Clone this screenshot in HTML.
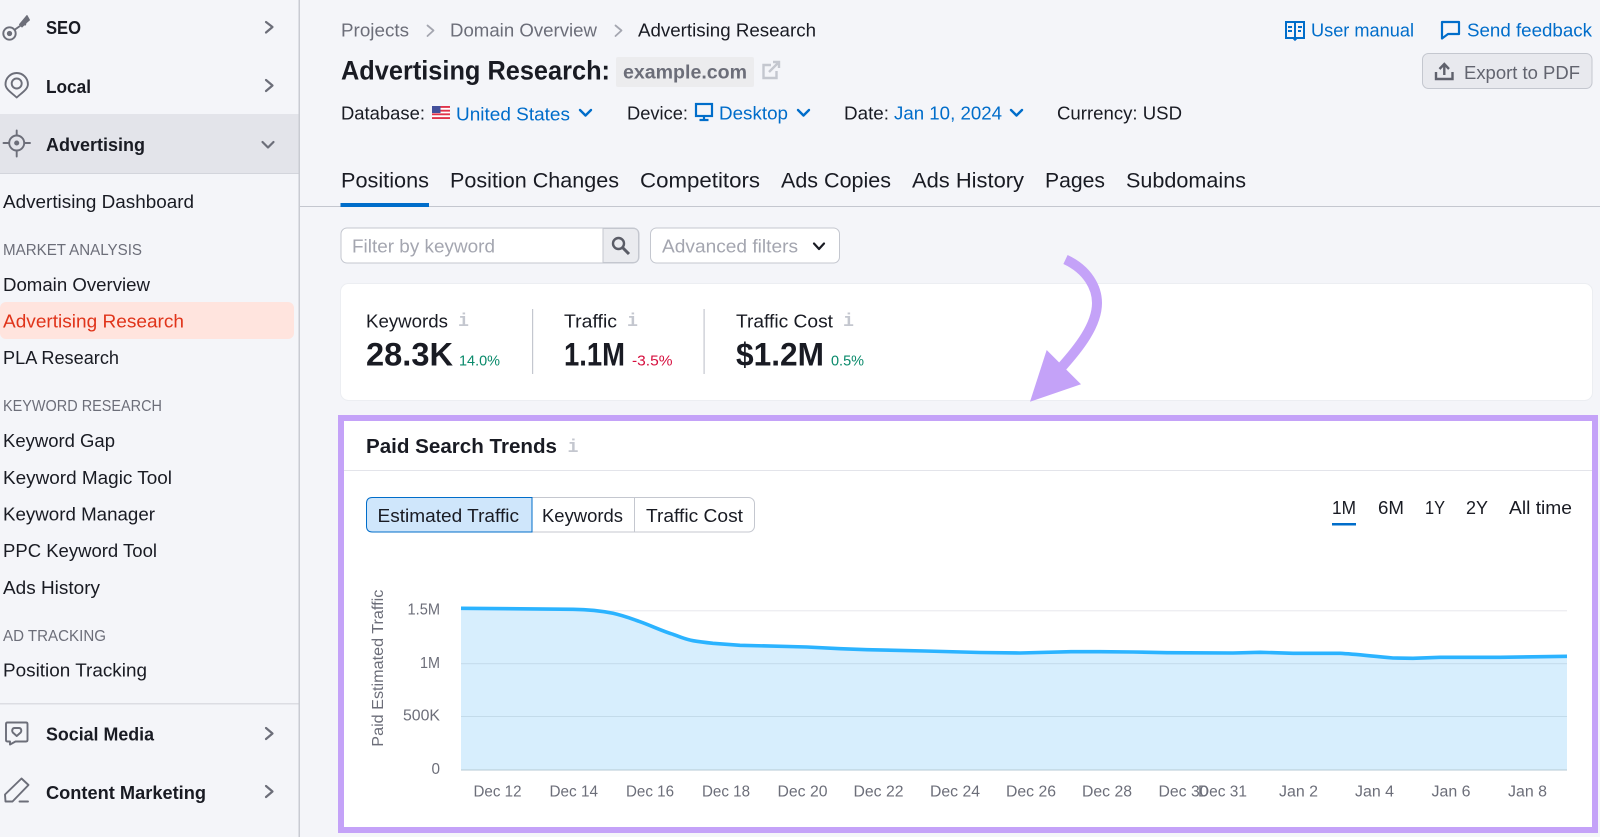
<!DOCTYPE html>
<html lang="en"><head><meta charset="utf-8"><title>Advertising Research</title>
<style>
html,body{margin:0;padding:0;background:#f4f5f9;width:1600px;height:837px;overflow:hidden}
svg{display:block;position:absolute;left:0;top:0}
text{font-family:"Liberation Sans",Arial,sans-serif;fill:#191b23}
.nav{font-size:18px;font-weight:700}
.li{font-size:18.500px}
.cap{font-size:15.500px;fill:#6c6e79}
.t{font-size:18.500px}
.g{fill:#6c6e79}
.b{fill:#006dca}
.ph{fill:#a4a6b0;font-size:18.500px}
.tab{font-size:21px}
.big{font-size:32.500px;font-weight:700}
.d{font-size:15px}
.ax{font-size:15.500px;fill:#6c6e79}
.i{font-family:"Liberation Mono",monospace;font-size:18px;font-weight:700;fill:#c4c7cf;text-anchor:middle}
.ic{fill:none;stroke:#6c6e79;stroke-width:1.900;stroke-linecap:round;stroke-linejoin:round}
.cv{fill:none;stroke:#6c6e79;stroke-width:2.200;stroke-linecap:round;stroke-linejoin:round}
.cb{fill:none;stroke:#006dca;stroke-width:2.400;stroke-linecap:round;stroke-linejoin:round}
.bc{fill:none;stroke:#a4a6b0;stroke-width:1.800;stroke-linecap:round;stroke-linejoin:round}
</style></head><body>
<svg width="1600" height="837" viewBox="0 0 1600 837" xmlns="http://www.w3.org/2000/svg">
<rect width="1600" height="837" fill="#f4f5f9"/>

<!-- Sidebar -->
<rect x="298.500" y="0" width="1.500" height="837" fill="#c9cbd2"/>
<rect x="0" y="114" width="298.500" height="60" fill="#e3e4ea"/>
<rect x="0" y="173" width="298.500" height="1" fill="#d3d5dc"/>
<rect x="0" y="302" width="294" height="37" rx="6" fill="#ffe4de"/>
<rect x="0" y="703" width="298.500" height="1.500" fill="#dcdde3"/>

<!-- SEO key -->
<g class="ic"><circle cx="9.500" cy="33.500" r="6.200"/><circle cx="9.500" cy="33.500" r="1.700" fill="#6c6e79"/><path d="M15 29.500 L20 26"/><path d="M19.500 24.500 L22 27 L24 25 L25.500 25 L26 23 L29.500 20 L27 15.500 Z" fill="#6c6e79" stroke-width="1"/></g>
<text class="nav" x="46" y="34" textLength="35" lengthAdjust="spacingAndGlyphs">SEO</text>
<path class="cv" d="M266 22 L272.500 27 L266 32.500"/>

<!-- Local pin -->
<g class="ic"><path d="M16.700 97.500 C12 93 5.500 89.500 5.500 84.200 A11.200 11.200 0 1 1 27.900 84.200 C27.900 89.500 21.400 93 16.700 97.500 Z"/><circle cx="16.700" cy="83.500" r="5"/></g>
<text class="nav" x="46" y="93" textLength="45" lengthAdjust="spacingAndGlyphs">Local</text>
<path class="cv" d="M266 80 L272.500 85.500 L266 91"/>

<!-- Advertising target -->
<g class="ic"><circle cx="16.700" cy="143" r="7.500"/><circle cx="16.700" cy="143" r="1.600" fill="#6c6e79"/><path d="M3.500 143 H9 M24.500 143 H30 M16.700 130.500 V135.500 M16.700 150.500 V156.500"/></g>
<text class="nav" x="46" y="151" textLength="99" lengthAdjust="spacingAndGlyphs">Advertising</text>
<path class="cv" d="M262.500 142 L268 147.500 L273.500 142"/>

<text class="li" x="3" y="208" textLength="191" lengthAdjust="spacingAndGlyphs">Advertising Dashboard</text>
<text class="cap" x="3" y="255" textLength="139" lengthAdjust="spacingAndGlyphs">MARKET ANALYSIS</text>
<text class="li" x="3" y="291" textLength="147" lengthAdjust="spacingAndGlyphs">Domain Overview</text>
<text class="li" x="3" y="327.500" textLength="181" lengthAdjust="spacingAndGlyphs" style="fill:#e0341a">Advertising Research</text>
<text class="li" x="3" y="364" textLength="116" lengthAdjust="spacingAndGlyphs">PLA Research</text>
<text class="cap" x="3" y="411" textLength="159" lengthAdjust="spacingAndGlyphs">KEYWORD RESEARCH</text>
<text class="li" x="3" y="447" textLength="112" lengthAdjust="spacingAndGlyphs">Keyword Gap</text>
<text class="li" x="3" y="484" textLength="169" lengthAdjust="spacingAndGlyphs">Keyword Magic Tool</text>
<text class="li" x="3" y="520.500" textLength="152" lengthAdjust="spacingAndGlyphs">Keyword Manager</text>
<text class="li" x="3" y="557" textLength="154" lengthAdjust="spacingAndGlyphs">PPC Keyword Tool</text>
<text class="li" x="3" y="594" textLength="97" lengthAdjust="spacingAndGlyphs">Ads History</text>
<text class="cap" x="3" y="641" textLength="103" lengthAdjust="spacingAndGlyphs">AD TRACKING</text>
<text class="li" x="3" y="676.500" textLength="144" lengthAdjust="spacingAndGlyphs">Position Tracking</text>

<!-- Social -->
<g class="ic"><path d="M7.500 722.500 H26 Q27.500 722.500 27.500 724 V740 Q27.500 741.500 26 741.500 H15.500 L10 744.500 V741.500 H7.500 Q6 741.500 6 740 V724 Q6 722.500 7.500 722.500 Z"/><path d="M16.700 736 L12.800 732.500 C11.500 730.500 12.500 728 14.500 728 H19 C21 728 22 730.500 20.700 732.500 Z"/></g>
<text class="nav" x="46" y="740.700" textLength="108" lengthAdjust="spacingAndGlyphs">Social Media</text>
<path class="cv" d="M266 728 L272.500 733.500 L266 739"/>

<!-- Pencil -->
<g class="ic"><path d="M5.500 801.500 L5 794.500 L21.500 778.500 L28.500 785 L12.500 801.500 Z"/><path d="M19.500 801.500 H28"/></g>
<text class="nav" x="46" y="799" textLength="160" lengthAdjust="spacingAndGlyphs">Content Marketing</text>
<path class="cv" d="M266 786 L272.500 791.500 L266 797"/>

<!-- Breadcrumbs -->
<text class="t g" x="341" y="36.500" textLength="68" lengthAdjust="spacingAndGlyphs">Projects</text>
<path class="bc" d="M427.500 25.500 L433.500 30.500 L427.500 36"/>
<text class="t g" x="450" y="36.500" textLength="147" lengthAdjust="spacingAndGlyphs">Domain Overview</text>
<path class="bc" d="M615.500 25.500 L621.500 30.500 L615.500 36"/>
<text class="t" x="638" y="36.500" textLength="178" lengthAdjust="spacingAndGlyphs">Advertising Research</text>

<!-- Top right links -->
<g fill="none" stroke="#006dca" stroke-width="2"><path d="M1286 22 H1295 V38 H1286 Z M1295 22 H1304 V38 H1295 Z"/><path d="M1293 38 L1295 40 L1297 38" stroke-width="1.600"/><path d="M1288 27 H1292 M1288 31 H1292 M1298 27 H1302 M1298 31 H1301" stroke-width="2"/></g>
<text class="t b" x="1311" y="36.500" textLength="103" lengthAdjust="spacingAndGlyphs">User manual</text>
<path d="M1442 22 H1459 V34 H1448 L1442 38.500 Z" fill="none" stroke="#006dca" stroke-width="2.200" stroke-linejoin="round"/>
<text class="t b" x="1467" y="36.500" textLength="125" lengthAdjust="spacingAndGlyphs">Send feedback</text>

<!-- Title -->
<text x="341" y="79.500" font-size="26.500" font-weight="700" textLength="269" lengthAdjust="spacingAndGlyphs">Advertising Research:</text>
<rect x="616" y="57" width="138" height="30" rx="2" fill="#ececee"/>
<text class="g" x="623" y="78.700" font-size="19.500" font-weight="700" textLength="124" lengthAdjust="spacingAndGlyphs">example.com</text>
<g fill="none" stroke="#c4c7cf" stroke-width="2.400"><path d="M771 65 H763.500 V78 H776.500 V71"/><path d="M769 72 L778.500 62.500 M773 62 H779 V68"/></g>

<!-- Export -->
<rect x="1422.500" y="53.500" width="169.500" height="35" rx="6" fill="#e8e9ee" stroke="#c4c7cf"/>
<g fill="none" stroke="#5f616c" stroke-width="2.400"><path d="M1436 72 V79 H1452.500 V72"/><path d="M1444.300 75 V64.500 M1439.500 69 L1444.300 64 L1449 69"/></g>
<text class="t" style="fill:#62646f" x="1464" y="79" textLength="116" lengthAdjust="spacingAndGlyphs">Export to PDF</text>

<!-- Filter row 1 -->
<text class="t" x="341" y="119.500" textLength="84" lengthAdjust="spacingAndGlyphs">Database:</text>
<g><rect x="432" y="106" width="18" height="13" fill="#fff"/><path d="M432 106 h18 v1.900 h-18z M432 109.700 h18 v1.900 h-18z M432 113.400 h18 v1.900 h-18z M432 117.100 h18 v1.900 h-18z" fill="#e0334a"/><rect x="432" y="106" width="8.500" height="7" fill="#43509b"/></g>
<text class="t b" x="456" y="120.700" textLength="114" lengthAdjust="spacingAndGlyphs">United States</text>
<path class="cb" d="M580 110 L585.500 115.500 L591 110"/>
<text class="t" x="627" y="119.500" textLength="61" lengthAdjust="spacingAndGlyphs">Device:</text>
<g fill="none" stroke="#006dca" stroke-width="2.200"><rect x="696" y="104" width="16" height="12"/><path d="M704 116 V119.500 M699.500 120 H708.500"/></g>
<text class="t b" x="719" y="119.500" textLength="69" lengthAdjust="spacingAndGlyphs">Desktop</text>
<path class="cb" d="M798 110 L803.500 115.500 L809 110"/>
<text class="t" x="844" y="119.500" textLength="45" lengthAdjust="spacingAndGlyphs">Date:</text>
<text class="t b" x="894" y="119.500" textLength="108" lengthAdjust="spacingAndGlyphs">Jan 10, 2024</text>
<path class="cb" d="M1011 110 L1016.500 115.500 L1022 110"/>
<text class="t" x="1057" y="119.500" textLength="125" lengthAdjust="spacingAndGlyphs">Currency: USD</text>

<!-- Tabs -->
<rect x="300" y="206" width="1300" height="1" fill="#c4c7cf"/>
<rect x="340.500" y="203" width="88.500" height="4" fill="#006dca"/>
<text class="tab" x="341" y="187.700" textLength="88" lengthAdjust="spacingAndGlyphs">Positions</text>
<text class="tab" x="450" y="187.700" textLength="169" lengthAdjust="spacingAndGlyphs">Position Changes</text>
<text class="tab" x="640" y="187.700" textLength="120" lengthAdjust="spacingAndGlyphs">Competitors</text>
<text class="tab" x="781" y="187.700" textLength="110" lengthAdjust="spacingAndGlyphs">Ads Copies</text>
<text class="tab" x="912" y="187.700" textLength="112" lengthAdjust="spacingAndGlyphs">Ads History</text>
<text class="tab" x="1045" y="187.700" textLength="60" lengthAdjust="spacingAndGlyphs">Pages</text>
<text class="tab" x="1126" y="187.700" textLength="120" lengthAdjust="spacingAndGlyphs">Subdomains</text>

<!-- Filters -->
<rect x="341" y="228" width="298" height="35" rx="6" fill="#fff" stroke="#c4c7cf"/>
<path d="M603 228.500 H633 Q638.500 228.500 638.500 234 V257 Q638.500 262.500 633 262.500 H603 Z" fill="#eaebef" stroke="#c4c7cf"/>
<text class="ph" x="352" y="252.700" textLength="143" lengthAdjust="spacingAndGlyphs">Filter by keyword</text>
<g fill="none" stroke="#5a5c66" stroke-width="2.400"><circle cx="618.500" cy="243.500" r="5.500"/><path d="M622.500 247.500 L629 254" stroke-width="3"/></g>
<rect x="650.500" y="228" width="189" height="35" rx="6" fill="#fff" stroke="#c4c7cf"/>
<text class="ph" x="662" y="252.700" textLength="136" lengthAdjust="spacingAndGlyphs">Advanced filters</text>
<path d="M814 243.500 L819 249 L824 243.500" fill="none" stroke="#191b23" stroke-width="2.200" stroke-linecap="round" stroke-linejoin="round"/>

<!-- Summary card -->
<rect x="340.500" y="283.500" width="1252" height="117" rx="8" fill="#fff" stroke="#eceef2"/>
<text class="t" x="366" y="327.700" textLength="82" lengthAdjust="spacingAndGlyphs">Keywords</text>
<text class="i" x="463.500" y="326">i</text>
<text class="big" x="366" y="365.700" textLength="87" lengthAdjust="spacingAndGlyphs">28.3K</text>
<text class="d" x="459" y="365.700" textLength="41" lengthAdjust="spacingAndGlyphs" style="fill:#0a8a6b">14.0%</text>
<rect x="532" y="309" width="1.200" height="65" fill="#c4c7cf"/>
<text class="t" x="564" y="327.700" textLength="53" lengthAdjust="spacingAndGlyphs">Traffic</text>
<text class="i" x="632.500" y="326">i</text>
<text class="big" x="564" y="365.700" textLength="61" lengthAdjust="spacingAndGlyphs">1.1M</text>
<text class="d" x="632" y="365.700" textLength="40.500" lengthAdjust="spacingAndGlyphs" style="fill:#d6103f">-3.5%</text>
<rect x="703.500" y="309" width="1.200" height="65" fill="#c4c7cf"/>
<text class="t" x="736" y="327.700" textLength="97" lengthAdjust="spacingAndGlyphs">Traffic Cost</text>
<text class="i" x="848.500" y="326">i</text>
<text class="big" x="736" y="365.700" textLength="88" lengthAdjust="spacingAndGlyphs">$1.2M</text>
<text class="d" x="831" y="365.700" textLength="33" lengthAdjust="spacingAndGlyphs" style="fill:#0a8a6b">0.5%</text>

<!-- Trends panel -->
<rect x="341" y="418" width="1254" height="412" fill="#fff" stroke="#c4a2f8" stroke-width="6"/>
<text x="366" y="453" font-size="20.500" font-weight="700" textLength="191" lengthAdjust="spacingAndGlyphs">Paid Search Trends</text>
<text class="i" x="573" y="452">i</text>
<rect x="344" y="470" width="1248" height="1" fill="#e3e4ea"/>

<!-- Segmented -->
<rect x="366.500" y="497.500" width="388" height="34.500" rx="6" fill="#fff" stroke="#c4c7cf"/>
<path d="M532 497.500 H372.500 Q366.500 497.500 366.500 503.500 V526 Q366.500 532 372.500 532 H532 Z" fill="#cfe6fb" stroke="#006dca"/>
<rect x="634" y="497.500" width="1" height="34.500" fill="#c4c7cf"/>
<text class="t" x="377.500" y="522" textLength="141.500" lengthAdjust="spacingAndGlyphs">Estimated Traffic</text>
<text class="t" x="542" y="522" textLength="81" lengthAdjust="spacingAndGlyphs">Keywords</text>
<text class="t" x="646" y="522" textLength="97" lengthAdjust="spacingAndGlyphs">Traffic Cost</text>

<!-- Range -->
<text class="t" x="1332" y="514" textLength="24" lengthAdjust="spacingAndGlyphs">1M</text>
<rect x="1332" y="523" width="24" height="2.500" fill="#006dca"/>
<text class="t" x="1378" y="514" textLength="26" lengthAdjust="spacingAndGlyphs">6M</text>
<text class="t" x="1425" y="514" textLength="20" lengthAdjust="spacingAndGlyphs">1Y</text>
<text class="t" x="1466" y="514" textLength="22" lengthAdjust="spacingAndGlyphs">2Y</text>
<text class="t" x="1509" y="514" textLength="63" lengthAdjust="spacingAndGlyphs">All time</text>

<!-- Chart -->
<rect x="461" y="610.300" width="1106" height="1" fill="#e6e7ec"/>
<path d="M461 608.300 L573 609.300 C590 609.500 602 611 613 613.300 C625 616 632 619 640 621.700 C652 626 662 631 673 634.300 C680 637 686 639.500 693 640.700 C700 642 707 642.700 713 643.300 L740 645.300 L807 647 L840 648.700 L867 649.700 L925 651 L980 652.500 L1020 653 L1071 651.700 L1100 651.700 L1133 652 L1167 652.700 L1233 653 L1260 652.300 L1293 653.300 L1340 653.300 C1355 654 1370 656 1393 658 L1413 658.300 L1440 657.300 L1500 657.300 L1567 656.300 L1567 770 L461 770 Z" fill="#d7eefd"/>
<rect x="461" y="663.200" width="1106" height="1" fill="#c3dbea"/>
<rect x="461" y="716" width="1106" height="1" fill="#c3dbea"/>
<rect x="461" y="769.500" width="1106" height="1" fill="#b4c9d4"/>
<path d="M461 608.300 L573 609.300 C590 609.500 602 611 613 613.300 C625 616 632 619 640 621.700 C652 626 662 631 673 634.300 C680 637 686 639.500 693 640.700 C700 642 707 642.700 713 643.300 L740 645.300 L807 647 L840 648.700 L867 649.700 L925 651 L980 652.500 L1020 653 L1071 651.700 L1100 651.700 L1133 652 L1167 652.700 L1233 653 L1260 652.300 L1293 653.300 L1340 653.300 C1355 654 1370 656 1393 658 L1413 658.300 L1440 657.300 L1500 657.300 L1567 656.300" fill="none" stroke="#2bb3ff" stroke-width="3.600"/>

<text class="ax" x="407.500" y="614.500" textLength="32.500" lengthAdjust="spacingAndGlyphs">1.5M</text>
<text class="ax" x="420" y="668" textLength="20" lengthAdjust="spacingAndGlyphs">1M</text>
<text class="ax" x="403" y="720.500" textLength="37" lengthAdjust="spacingAndGlyphs">500K</text>
<text class="ax" x="431.500" y="774" textLength="8.500" lengthAdjust="spacingAndGlyphs">0</text>
<text class="ax" transform="translate(383 746.700) rotate(-90)" textLength="157" lengthAdjust="spacingAndGlyphs">Paid Estimated Traffic</text>

<text class="ax" x="473.500" y="796.300" textLength="48" lengthAdjust="spacingAndGlyphs">Dec 12</text>
<text class="ax" x="549.500" y="796.300" textLength="48.500" lengthAdjust="spacingAndGlyphs">Dec 14</text>
<text class="ax" x="626" y="796.300" textLength="48" lengthAdjust="spacingAndGlyphs">Dec 16</text>
<text class="ax" x="702" y="796.300" textLength="48" lengthAdjust="spacingAndGlyphs">Dec 18</text>
<text class="ax" x="777.500" y="796.300" textLength="50" lengthAdjust="spacingAndGlyphs">Dec 20</text>
<text class="ax" x="853.500" y="796.300" textLength="50" lengthAdjust="spacingAndGlyphs">Dec 22</text>
<text class="ax" x="930" y="796.300" textLength="50" lengthAdjust="spacingAndGlyphs">Dec 24</text>
<text class="ax" x="1006" y="796.300" textLength="50" lengthAdjust="spacingAndGlyphs">Dec 26</text>
<text class="ax" x="1082" y="796.300" textLength="50" lengthAdjust="spacingAndGlyphs">Dec 28</text>
<text class="ax" x="1158.500" y="796.300" textLength="50" lengthAdjust="spacingAndGlyphs">Dec 30</text>
<text class="ax" x="1198" y="796.300" textLength="49" lengthAdjust="spacingAndGlyphs">Dec 31</text>
<text class="ax" x="1279" y="796.300" textLength="39" lengthAdjust="spacingAndGlyphs">Jan 2</text>
<text class="ax" x="1355" y="796.300" textLength="39" lengthAdjust="spacingAndGlyphs">Jan 4</text>
<text class="ax" x="1431.500" y="796.300" textLength="39" lengthAdjust="spacingAndGlyphs">Jan 6</text>
<text class="ax" x="1508" y="796.300" textLength="39" lengthAdjust="spacingAndGlyphs">Jan 8</text>

<!-- Arrow -->
<path d="M1065.500 259.500 C1088 270 1097 288 1097 303 C1097 325 1079 348 1060 369" fill="none" stroke="#c4a2f8" stroke-width="10"/>
<path d="M1046.700 350 L1081 384.300 L1030 401.700 Z" fill="#c4a2f8"/>
</svg>
</body></html>
